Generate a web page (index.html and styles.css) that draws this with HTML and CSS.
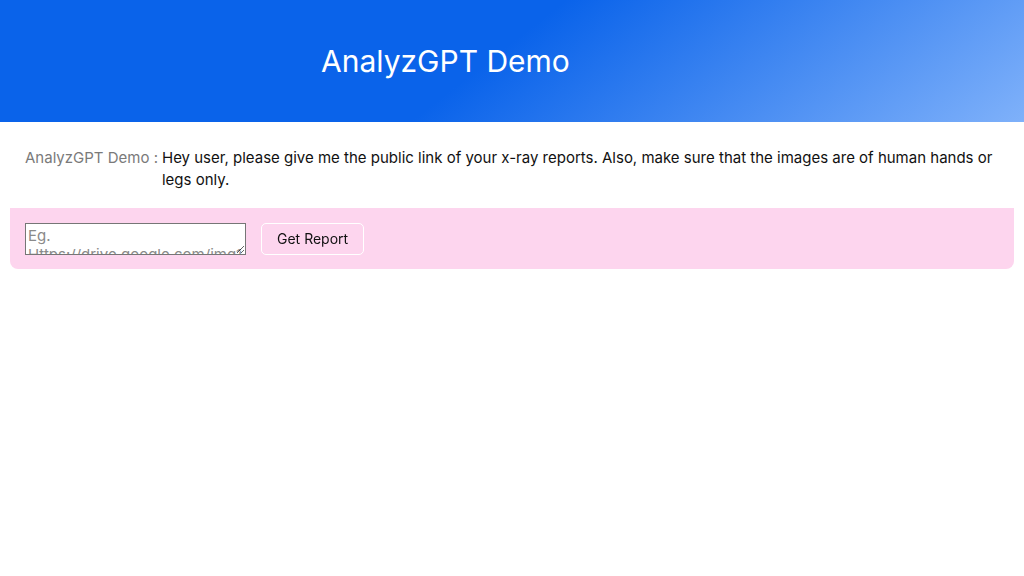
FILE: index.html
```html
<!DOCTYPE html>
<html>
<head>
<meta charset="utf-8">
<link rel="stylesheet" href="styles.css">
</head>
<body>
<header class="hero">
  <h1 class="hero-title">AnalyzGPT Demo</h1>
</header>
<main class="chat">
  <div class="msg">
    <span class="msg-author">AnalyzGPT Demo :</span>
    <p class="msg-text">Hey user, please give me the public link of your x-ray reports. Also, make sure that the images are of human hands or legs only.</p>
  </div>
  <form class="composer">
    <textarea class="composer-input" placeholder="Eg. Https://drive.google.com/img1"></textarea>
    <button type="button" class="composer-btn">Get Report</button>
  </form>
</main>
</body>
</html>
```
FILE: styles.css
```css
html, body {
  margin: 0;
  padding: 0;
  background: #ffffff;
  font-family: Inter, "Noto Sans", sans-serif;
}
.hero {
  height: 122px;
  display: flex;
  align-items: center;
  padding-left: 321px;
  box-sizing: border-box;
  background: linear-gradient(142deg, #0a63ea 0%, #0a63ea 48%, #7fb1fa 100%);
}
.hero-title {
  margin: 0;
  color: #ffffff;
  font-size: 30px;
  font-weight: 400;
}
.chat {
  padding: 25px 10px 0 10px;
}
.msg {
  display: flex;
  padding: 0 15px;
  font-size: 15px;
  line-height: 22px;
}
.msg-author {
  color: #7a7a7a;
  white-space: nowrap;
  margin-right: 4px;
}
.msg-text {
  margin: 0;
  color: #111111;
  padding-right: 0;
}
.composer {
  margin-top: 17px;
  background: #fdd5ee;
  border-radius: 0 0 8px 8px;
  padding: 15px 15px 14px 15px;
  display: flex;
  align-items: flex-start;
  gap: 15px;
}
.composer-input {
  width: 221px;
  height: 32px;
  box-sizing: border-box;
  margin: 0;
  padding: 2px;
  border: 1px solid #767676;
  font-family: Inter, "Noto Sans", sans-serif;
  font-size: 15px;
  line-height: normal;
  color: #333;
  background: #ffffff;
}
.composer-input::placeholder {
  color: #8a8a8a;
}
.composer-btn {
  height: 32px;
  padding: 0 15px 2px 15px;
  border: 1px solid #ffffff;
  border-radius: 5px;
  background: transparent;
  font-family: Inter, "Noto Sans", sans-serif;
  font-size: 14px;
  color: #111111;
}
```
